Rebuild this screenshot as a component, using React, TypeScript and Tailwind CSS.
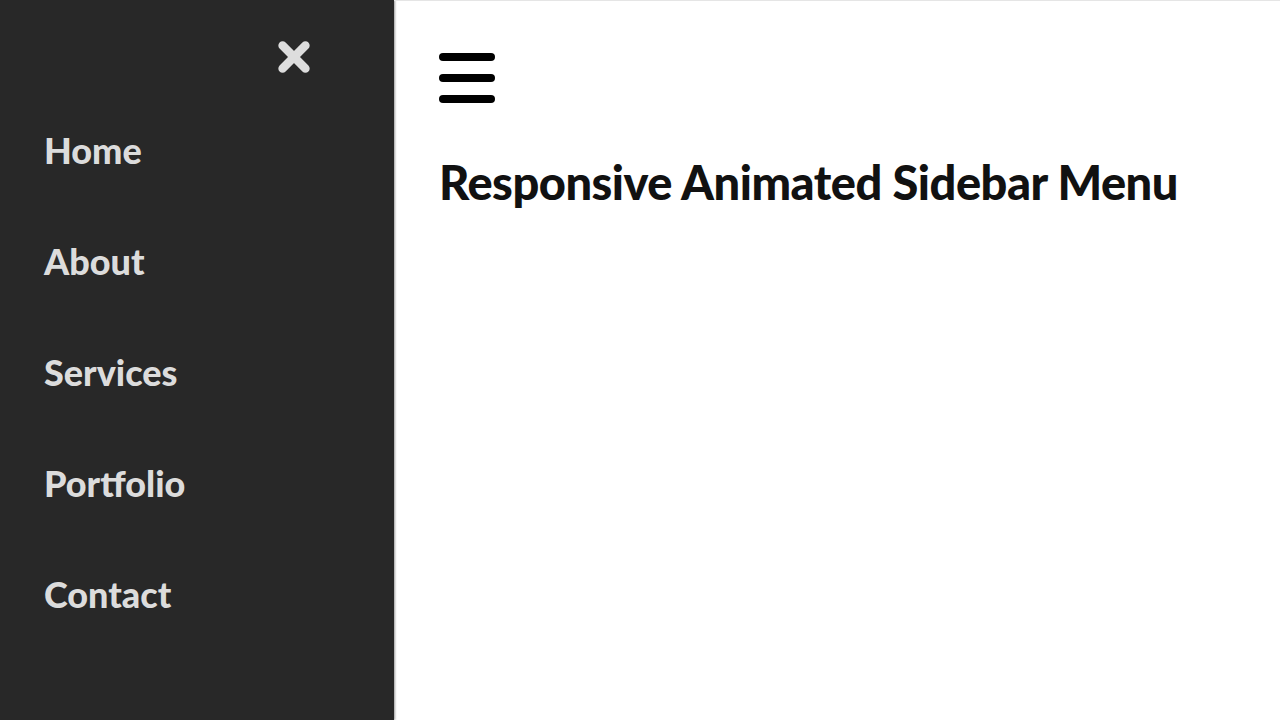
const links = ["Home", "About", "Services", "Portfolio", "Contact"];

export default function App() {
  return (
    <div className="flex h-[720px] w-[1280px] overflow-hidden bg-white font-['Lato',sans-serif]">
      <aside className="flex w-[394px] shrink-0 flex-col bg-[#282828] shadow-[1px_0_2px_rgba(0,0,0,0.4)]">
        <div className="flex justify-end pr-[81px] pt-[38px]">
          <svg viewBox="0 0 40 40" className="h-[38px] w-[38px]" aria-hidden>
            <path
              d="M8 8 L32 32 M32 8 L8 32"
              stroke="#dddddd"
              strokeWidth="9"
              strokeLinecap="round"
            />
          </svg>
        </div>
        <nav className="mt-[18px] flex flex-col pl-[44px]">
          {links.map((l) => (
            <a
              key={l}
              href="#"
              className="flex h-[111px] items-center text-[36px] font-black tracking-[0px] text-[#dcdcdc]"
            >
              {l}
            </a>
          ))}
        </nav>
      </aside>
      <main className="flex-1 border-t border-[#e5e5e5] pl-[45px] pt-[52px]">
        <button type="button" className="flex w-[56px] flex-col gap-[13px]">
          <span className="h-[8px] rounded-full bg-black" />
          <span className="h-[8px] rounded-full bg-black" />
          <span className="h-[8px] rounded-full bg-black" />
        </button>
        <h1 className="mt-[56px] text-[47px] font-black leading-none tracking-[-0.5px] text-[#111]">
          Responsive Animated Sidebar Menu
        </h1>
      </main>
    </div>
  );
}
